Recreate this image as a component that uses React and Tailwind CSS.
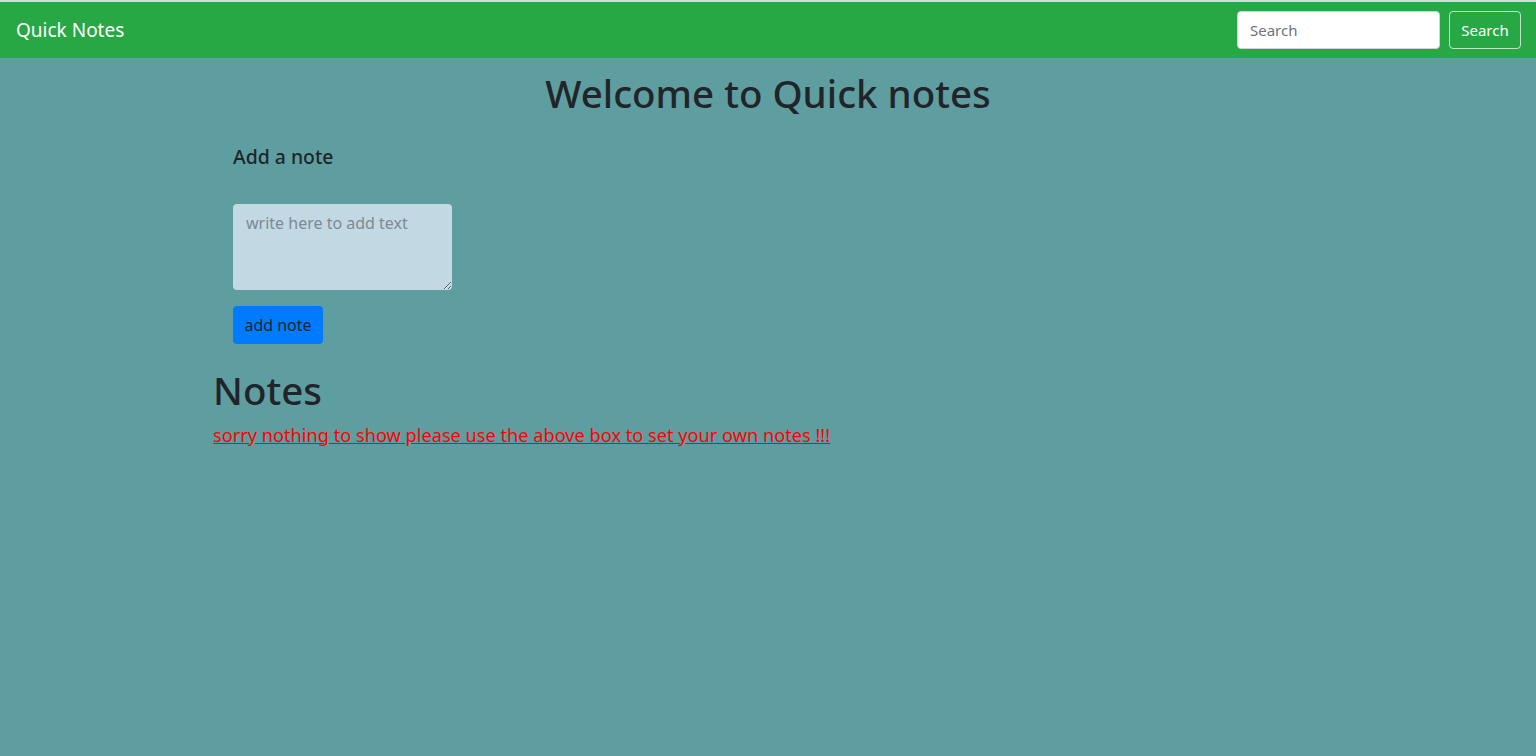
export default function App() {
  return (
    <div className="min-h-screen bg-[#5f9ea0] text-[#212529] font-['Noto_Sans',sans-serif] border-t-2 border-[#d9d9d9]">
      {/* navbar */}
      <nav className="h-14 bg-[#28a745] flex items-center justify-between pl-4 pr-[15px]">
        <span className="text-white text-[19px]">Quick Notes</span>
        <form className="flex items-center gap-[9px]" onSubmit={(e) => e.preventDefault()}>
          <input
            type="search"
            placeholder="Search"
            className="w-[203px] h-[38px] bg-white rounded px-3 text-[15px] text-[#495057] placeholder-[#6c757d] border border-[#ced4da] outline-none"
          />
          <button className="h-[38px] w-[72px] rounded border border-white/70 text-white text-[15px]">
            Search
          </button>
        </form>
      </nav>

      <h1 className="text-center text-[38.5px] font-medium leading-tight mt-[11px]">Welcome to Quick notes</h1>

      <div className="w-[1140px] mx-auto px-[15px]">
        {/* add note card */}
        <div className="p-5">
          <h5 className="text-[19.4px] font-medium leading-tight mt-[8px]">Add a note</h5>
          <textarea
            rows={3}
            placeholder="write here to add text"
            className="block mt-[35px] w-[219px] h-[86px] bg-[#c2d9e4] rounded px-[13px] py-[7px] text-base placeholder-[#7b8a93] outline-none resize-y"
          />
          <button className="mt-4 h-[38px] w-[90px] rounded bg-[#007bff] text-base text-[#212529]">add note</button>
        </div>

        <h1 className="text-[38.5px] font-medium leading-tight mt-[2px]">Notes</h1>
        <a href="#" className="block mt-[7px] text-[18.2px] text-[#ff0000] underline w-fit">
          sorry nothing to show please use the above box to set your own notes !!!
        </a>
      </div>
    </div>
  );
}
